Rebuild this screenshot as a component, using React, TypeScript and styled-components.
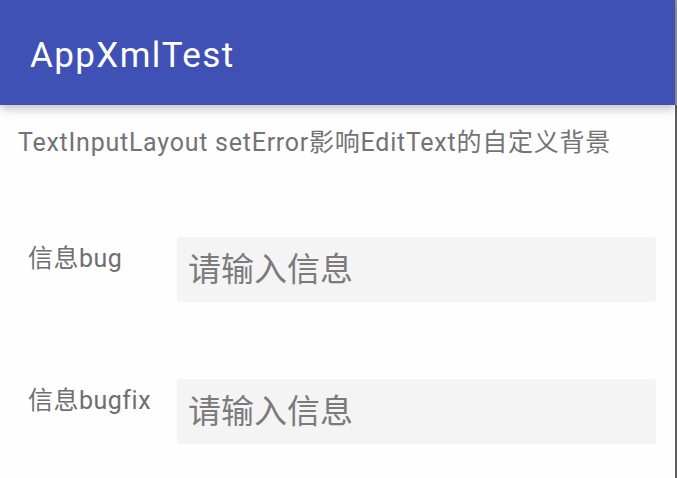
import React from "react";
import styled, { createGlobalStyle } from "styled-components";

const Global = createGlobalStyle`
  html, body { margin: 0; padding: 0; background: #ffffff; }
  body { font-family: Roboto, "Noto Sans CJK SC", sans-serif; }
  #root { width: 677px; height: 478px; overflow: hidden; }
`;

const Frame = styled.div`
  display: flex;
  width: 677px;
  height: 478px;
`;

const Screen = styled.div`
  width: 675px;
  height: 100%;
  display: flex;
  flex-direction: column;
  background: #fefefe;
`;

const Edge = styled.div`
  width: 2px;
  height: 100%;
  background: linear-gradient(to bottom, #9a9a9a 0, #9a9a9a 105px, #5e5e5e 105px, #5e5e5e 100%);
`;

const AppBar = styled.header`
  height: 105px;
  flex: none;
  background: #3f51b5;
  display: flex;
  align-items: center;
  padding-left: 30px;
  box-shadow: 0 3px 10px rgba(0, 0, 0, 0.28);
  position: relative;
  z-index: 1;
`;

const Title = styled.h1`
  margin: 0;
  font-family: Roboto, sans-serif;
  font-weight: 400;
  font-size: 35px;
  letter-spacing: 1.4px;
  color: #ffffff;
  line-height: 1;
  padding-top: 6px;
`;

const Content = styled.main`
  display: flex;
  flex-direction: column;
`;

const Subtitle = styled.p`
  margin: 0;
  padding: 22px 0 0 18px;
  font-family: Roboto, "Noto Sans CJK SC", sans-serif;
  font-size: 25px;
  letter-spacing: 0.75px;
  line-height: 32px;
  color: #737373;
  white-space: nowrap;
`;

const Row = styled.div<{ $top: number }>`
  display: flex;
  align-items: flex-start;
  margin-top: ${(p) => p.$top}px;
  padding-left: 28px;
`;

const Label = styled.span`
  width: 149px;
  flex: none;
  padding-top: 7px;
  font-family: Roboto, "Noto Sans CJK SC", sans-serif;
  font-size: 25px;
  letter-spacing: 0.5px;
  line-height: 30px;
  color: #6f6f6f;
  white-space: nowrap;
`;

const Field = styled.input`
  box-sizing: border-box;
  width: 479px;
  height: 65px;
  border: none;
  outline: none;
  border-radius: 3px;
  background: #f4f4f4;
  padding: 0 0 5px 11px;
  font-family: "Noto Sans CJK SC", sans-serif;
  font-size: 33px;
  color: #333;
  &::placeholder {
    color: #7b7b7b;
  }
`;

export default function App() {
  return (
    <>
      <Global />
      <Frame>
        <Screen>
          <AppBar>
            <Title>AppXmlTest</Title>
          </AppBar>
          <Content>
            <Subtitle>TextInputLayout setError影响EditText的自定义背景</Subtitle>
            <Row $top={78}>
              <Label>信息bug</Label>
              <Field placeholder="请输入信息" />
            </Row>
            <Row $top={77}>
              <Label>信息bugfix</Label>
              <Field placeholder="请输入信息" />
            </Row>
          </Content>
        </Screen>
        <Edge />
      </Frame>
    </>
  );
}
